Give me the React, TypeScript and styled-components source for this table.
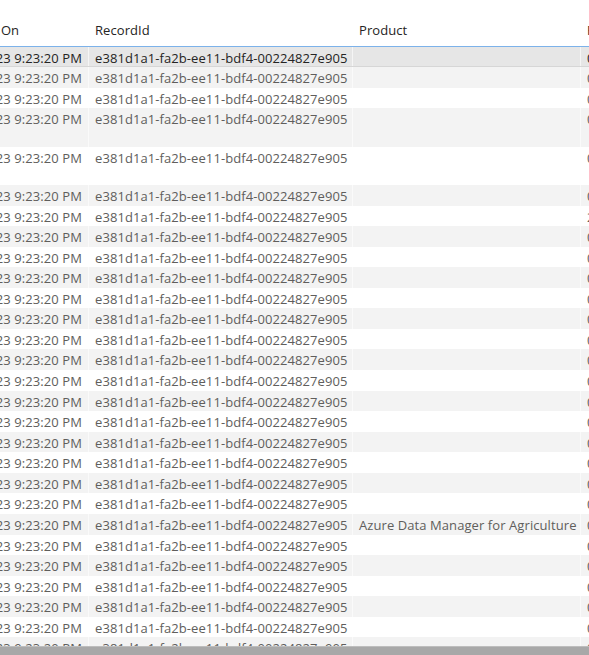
import React, { useLayoutEffect, useRef } from "react";
import styled, { createGlobalStyle, css } from "styled-components";

const GlobalStyle = createGlobalStyle`
  html, body {
    margin: 0;
    padding: 0;
    background: #ffffff;
    overflow: hidden;
  }
  body {
    font-family: "Open Sans", "Noto Sans", "Liberation Sans", sans-serif;
    font-size: 13px;
    letter-spacing: 0.08px;
  }
`;

const COLUMNS = "146px 264px 228px 120px";
const SCROLL_LEFT = 57;

const Frame = styled.div`
  width: 589px;
  height: 655px;
  display: flex;
  flex-direction: column;
  background: #ffffff;
`;

const Viewport = styled.div`
  flex: 1;
  min-height: 0;
  overflow: hidden;
`;

const Table = styled.div`
  width: max-content;
  display: flex;
  flex-direction: column;
`;

const HeaderRow = styled.div`
  display: grid;
  grid-template-columns: ${COLUMNS};
  height: 47px;
  box-sizing: border-box;
  border-bottom: 1px solid #7cb2ea;
`;

const HeaderCell = styled.div`
  display: flex;
  align-items: flex-end;
  padding: 0 6px 7px 6px;
  line-height: 18px;
  color: #252423;
  white-space: nowrap;
  overflow: hidden;
`;

type Tone = "selected" | "alt" | "plain";

const toneBg: Record<Tone, string> = {
  selected: "#e6e6e6",
  alt: "#f3f3f3",
  plain: "#ffffff",
};

const Row = styled.div<{ $tone: Tone; $h: number }>`
  display: grid;
  grid-template-columns: ${COLUMNS};
  height: ${(p) => p.$h}px;
  flex-shrink: 0;
  box-sizing: border-box;
  background: ${(p) => toneBg[p.$tone]};
  color: ${(p) => (p.$tone === "selected" ? "#252423" : "#605e5c")};
  ${(p) =>
    p.$tone === "selected" &&
    css`
      border-bottom: 1px solid #d6d6d6;
    `}
`;

const Cell = styled.div<{ $end?: boolean }>`
  display: flex;
  justify-content: ${(p) => (p.$end ? "flex-end" : "flex-start")};
  align-items: flex-start;
  padding: 1px 6px 0 6px;
  line-height: 20px;
  white-space: nowrap;
  overflow: hidden;
  border-right: 1px solid rgba(255, 255, 255, 0.6);
`;

const ScrollTrack = styled.div`
  height: 9px;
  flex-shrink: 0;
  background: #a8a8a8;
  border-top: 1px solid #bdbdbd;
  box-sizing: border-box;
`;

type Record_ = {
  date: string;
  id: string;
  product: string;
  value: string;
  height: number;
};

const ID = "e381d1a1-fa2b-ee11-bdf4-00224827e905";
const DATE = "11/8/2023 9:23:20 PM";

const heights = [20.33, 20.33, 20.34, 39, 38];
const records: Record_[] = Array.from({ length: 30 }, (_, i) => ({
  date: DATE,
  id: ID,
  product: i === 21 ? "Azure Data Manager for Agriculture" : "",
  value: i === 6 ? "2" : "0",
  height: i < heights.length ? heights[i] : 20.57,
}));

export default function App() {
  const viewRef = useRef<HTMLDivElement>(null);

  useLayoutEffect(() => {
    if (viewRef.current) viewRef.current.scrollLeft = SCROLL_LEFT;
  }, []);

  return (
    <>
      <GlobalStyle />
      <Frame>
        <Viewport ref={viewRef}>
          <Table>
            <HeaderRow>
              <HeaderCell>Created On</HeaderCell>
              <HeaderCell>RecordId</HeaderCell>
              <HeaderCell>Product</HeaderCell>
              <HeaderCell>PartitionCount</HeaderCell>
            </HeaderRow>
            {records.map((r, i) => (
              <Row
                key={i}
                $h={r.height}
                $tone={i === 0 ? "selected" : i % 2 === 1 ? "alt" : "plain"}
              >
                <Cell $end>{r.date}</Cell>
                <Cell>{r.id}</Cell>
                <Cell>{r.product}</Cell>
                <Cell>{r.value}</Cell>
              </Row>
            ))}
          </Table>
        </Viewport>
        <ScrollTrack />
      </Frame>
    </>
  );
}
